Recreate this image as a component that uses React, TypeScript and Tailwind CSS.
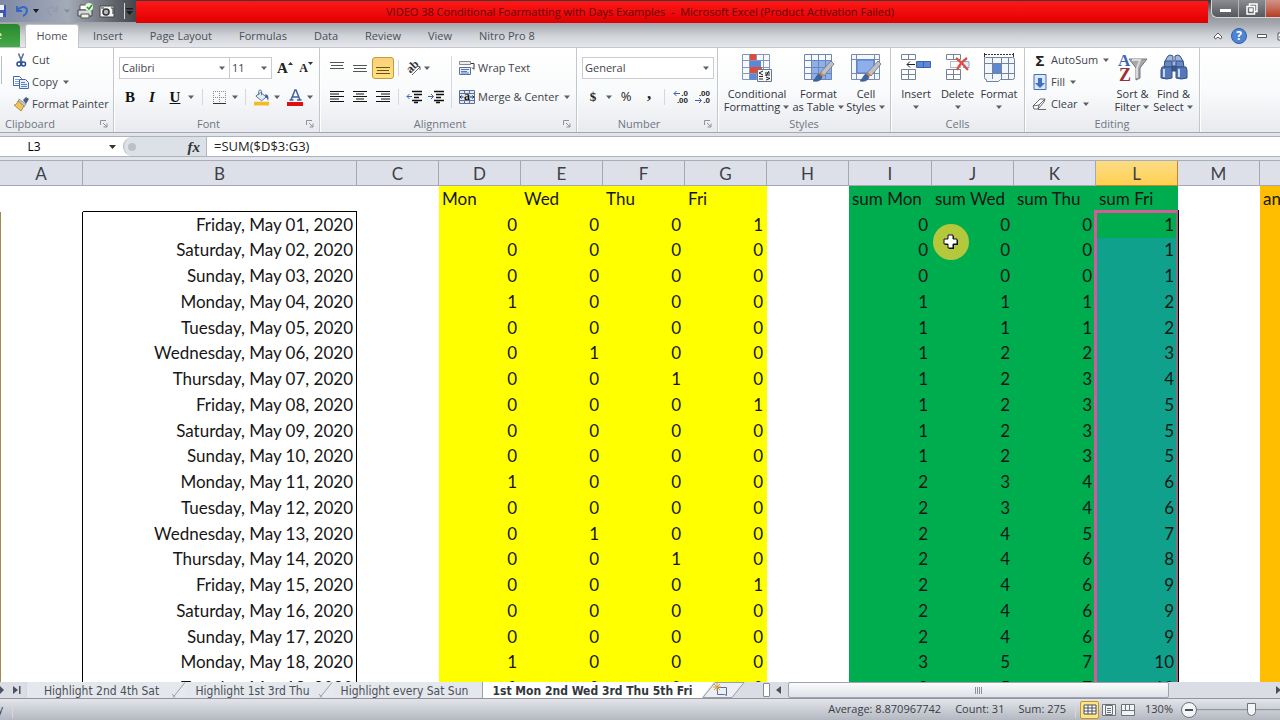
import type { ReactNode } from 'react';

const DAY_NAMES = ['Sunday', 'Monday', 'Tuesday', 'Wednesday', 'Thursday', 'Friday', 'Saturday'];
const TRACKED = [1, 3, 4, 5];

const buildRows = () => {
  let total = [0, 0, 0, 0];
  return Array.from({ length: 19 }, (_, i) => {
    const weekday = (5 + i) % 7;
    const flags = TRACKED.map((d) => (d === weekday ? 1 : 0));
    total = total.map((t, n) => t + flags.slice(0, n + 1).reduce((a: number, b) => a + b, 0));
    return {
      date: `${DAY_NAMES[weekday]}, May ${String(i + 1).padStart(2, '0')}, 2020`,
      flags,
      sums: total,
    };
  });
};

const rows = buildRows();
const COLUMNS = ['A', 'B', 'C', 'D', 'E', 'F', 'G', 'H', 'I', 'J', 'K', 'L', 'M'];

const Arrow = () => (
  <svg width="8" height="8" viewBox="0 0 8 8" className="shrink-0">
    <path d="M1 2.500h6L4 6z" fill="#5a5f68" />
  </svg>
);

const Sep = ({ className = '' }: { className?: string }) => (
  <span className={`w-px shrink-0 bg-[#d5d8de] ${className}`} />
);

const Launcher = () => (
  <button aria-label="More options" className="mr-1 flex w-3 items-center justify-center">
    <svg width="9" height="9" viewBox="0 0 9 9" fill="none" stroke="#8d929b">
      <path d="M1.500 6V1.500H7M4 4l4 4M8 4.500V8H4.500" />
    </svg>
  </button>
);

interface GroupProps {
  label: string;
  width: string;
  launcher?: boolean;
  align?: string;
  children: ReactNode;
}

const Group = ({ label, width, launcher, align = 'text-center', children }: GroupProps) => (
  <section className={`flex shrink-0 flex-col border-r border-[#c3c7ce] shadow-[1px_0_0_#ffffff] ${width}`}>
    <div className="flex flex-1">{children}</div>
    <div className="flex h-[17px] text-[#70757e]">
      <span className={`flex-1 leading-[17px] ${align}`}>{label}</span>
      {launcher && <Launcher />}
    </div>
  </section>
);

/* ---------- small icons ---------- */

const CutIcon = () => (
  <svg width="16" height="16" viewBox="0 0 16 16" fill="none">
    <path d="M5.500 1.500L9 10M10.500 1.500L7 10" stroke="#5b6f96" strokeWidth="1.600" />
    <circle cx="6" cy="12" r="2" stroke="#274b94" strokeWidth="1.500" />
    <circle cx="10.500" cy="12" r="2" stroke="#274b94" strokeWidth="1.500" />
  </svg>
);

const CopyIcon = () => (
  <svg width="16" height="16" viewBox="0 0 16 16" fill="#ffffff" stroke="#4567a8">
    <path d="M.5 2.500h6l2 2v7h-8z" />
    <path d="M2 5.500h4M2 7.500h4M2 9.500h4" stroke="#7fa0d8" />
    <path d="M6.500 5.500h6l3 3v6h-9z" fill="#e6eefb" />
    <path d="M8 8.500h4M8 10.500h6M8 12.500h6" stroke="#5b82c8" />
  </svg>
);

const PainterIcon = () => (
  <svg width="16" height="16" viewBox="0 0 16 16">
    <path d="M10 4l3-3 3 2-3 5z" fill="#4a5c88" />
    <path d="M6 3l7 5-2 3-6-5z" fill="#c4c8cf" stroke="#7c8087" strokeWidth=".7" />
    <path d="M5 5l6 5-3 5-7-6c2 0 3-2 4-4z" fill="#edc65a" stroke="#a77d2b" strokeWidth=".8" />
  </svg>
);

const BordersIcon = () => (
  <svg width="15" height="15" viewBox="0 0 15 15" fill="none" stroke="#8a8a8a" strokeDasharray="1 1">
    <path d="M1.500 1v12M7.500 1v12M13.500 1v12M1 1.500h13M1 7.500h13" />
    <path d="M1 13.500h13" stroke="#333333" strokeDasharray="none" />
  </svg>
);

const FillColorIcon = () => (
  <svg width="17" height="17" viewBox="0 0 17 17">
    <path d="M7 3l6 5-5 4-6-5z" fill="#e3ecf9" stroke="#5a6c8c" />
    <path d="M5 6V2c0-2 3-2 3 0v4" fill="none" stroke="#5a6c8c" />
    <path d="M12 5c3 0 4 3 3 7-1-2-1-3-3-4z" fill="#355fae" />
    <path d="M0 13h16v4H0z" fill="#f0bd25" />
  </svg>
);

const FontColorIcon = () => (
  <svg width="16" height="17" viewBox="0 0 16 17">
    <path d="M4 11L8 1h1l4 10M5.500 8h6M2.500 11h4M10 11h4.500" fill="none" stroke="#3c5fa3" strokeWidth="1.500" />
    <path d="M0 13h16v4H0z" fill="#dd1111" />
  </svg>
);

const Lines = ({ d, color = '#111111' }: { d: string; color?: string }) => (
  <svg width="14" height="14" viewBox="0 0 14 14" stroke={color} fill="none">
    <path d={d} />
  </svg>
);

const IndentIcon = ({ right = false }: { right?: boolean }) => (
  <svg width="16" height="14" viewBox="0 0 16 14" fill="none" stroke="#111111">
    <path d="M6 1.500h10M8 4.500h8M8 7.500h5M6 10.500h10M8 12.500h4" strokeWidth="1.400" />
    <path d={right ? 'M0 6.500h5M3 4l2.500 2.500L3 9' : 'M1 6.500h5M3.500 4L1 6.500 3.500 9'} stroke="#3e62b2" />
  </svg>
);

const OrientationIcon = () => (
  <svg width="16" height="16" viewBox="0 0 16 16" fill="none">
    <text x="1" y="11" transform="rotate(-45 6 8)" fontSize="12" fontWeight="bold" fontFamily="Liberation Serif, serif" fill="#333333">
      ab
    </text>
    <path d="M6 15l8-8M14 10V6.500h-3.500" stroke="#666666" />
  </svg>
);

const WrapIcon = () => (
  <svg width="16" height="16" viewBox="0 0 16 16" fill="none">
    <path d="M.5 1.500h11v3H.5z" fill="#eeeeee" stroke="#888888" />
    <path d="M.5 7.500h11v7H.5z" fill="#e4edfa" stroke="#5e6f8f" />
    <path d="M2 9.500h8M2 11.500h6M2 13h8" stroke="#5279c0" />
    <path d="M12 3.500h3V9M13 7.500L15 9.500" stroke="#333333" />
  </svg>
);

const MergeIcon = () => (
  <svg width="16" height="16" viewBox="0 0 16 16" fill="none">
    <path d="M.5 1.500h15v13H.5zM5.500 1.500v3M10.500 1.500v3M5.500 12v3M10.500 12v3M.5 4.500h15M.5 11.500h15" fill="#dfe9f8" stroke="#60718f" />
    <text x="5" y="11" fontSize="12" fontWeight="bold" fontFamily="Liberation Serif, serif" fill="#111111">
      a
    </text>
    <path d="M1 8h3.500M2.500 6.500L1 8l1.500 1.500M11 8h4M13.500 6.500L15 8l-1.500 1.500" stroke="#1f2f55" />
  </svg>
);

const DecimalIcon = ({ increase = false }: { increase?: boolean }) => (
  <svg width="16" height="16" viewBox="0 0 16 16" fill="#222222" fontSize="8" fontWeight="bold" fontFamily="Liberation Sans, sans-serif">
    <text x="15" y="7" textAnchor="end">{increase ? '.0' : '.00'}</text>
    <text x="15" y="14" textAnchor="end">{increase ? '.00' : '.0'}</text>
    <path d={increase ? 'M1 4.500h6M3.500 2L1 4.500 3.500 7' : 'M0 11.500h6M4 9l2.500 2.500L4 14'} fill="none" stroke="#3e62b2" />
  </svg>
);

/* ---------- large icons ---------- */

const GRID = 'M1.500 1.500h27v25h-27zM8.500 1v26M15.500 1v26M22.500 1v26M1 7.500h28M1 14.500h28M1 20.500h28';

const Brush = () => (
  <>
    <path d="M28 8l3 3-10 12-4-3z" fill="#bfc1c4" stroke="#707276" strokeWidth=".8" />
    <path d="M18 19l3 3-2 2-3-3z" fill="#c08a4a" />
    <path d="M16 21l3 3c-1 4-5 5-9 4 3-2 3-6 6-7z" fill="#41649f" stroke="#32507f" strokeWidth=".6" />
  </>
);

const ConditionalIcon = () => (
  <svg width="32" height="29" viewBox="0 0 32 29">
    <path d={GRID} fill="#f6f9fe" stroke="#8496bb" />
    <path d="M9 1h6v6H9zM9 14h12v6H9z" fill="#dd4b3b" />
    <path d="M9 8h11v6H9zM9 21h6v6H9z" fill="#5f88d4" />
    <path d="M16.500 16.500h14v12h-14z" fill="#f7f8fb" stroke="#6b7687" />
    <path d="M22 18l-4 2 4 2M18 23.500h4M18 26h4M24 20h5M24 22h5M28 18l-3 5M25 24l4 1.500-4 1.500" fill="none" stroke="#222222" />
  </svg>
);

const FormatTableIcon = () => (
  <svg width="32" height="29" viewBox="0 0 32 29">
    <path d={GRID} fill="#f6f9fe" />
    <path d="M9 8h20v19H9z" fill="#8db0ec" />
    <path d={GRID} fill="none" stroke="#6e86b6" />
    <Brush />
  </svg>
);

const CellStylesIcon = () => (
  <svg width="32" height="29" viewBox="0 0 32 29">
    <path d="M1.500 1.500h28v25h-28zM6.500 1v26M24.500 1v26M1 6.500h28M1 20.500h28" fill="#f3f7fd" stroke="#7a8cac" />
    <path d="M7 7h17v13H7z" fill="#8db0ec" stroke="#5279c0" />
    <Brush />
  </svg>
);

const InsertIcon = () => (
  <svg width="32" height="29" viewBox="0 0 32 29">
    <path d="M1.500 1.500h14v5h-14zM8.500 1v6M1.500 16.500h14v10h-14zM8.500 16v11M1 21.500h15" fill="#ffffff" stroke="#74829b" />
    <path d="M16.500 8.500h14v6h-14z" fill="#5f88d4" stroke="#3b62ad" />
    <path d="M23.500 8v7" stroke="#3b62ad" />
    <path d="M7 11.500h8M10 8.500l-3 3 3 3" fill="none" stroke="#222222" />
  </svg>
);

const DeleteIcon = () => (
  <svg width="32" height="29" viewBox="0 0 32 29">
    <path d="M4.500 1.500h14v5h-14zM11.500 1v6M4.500 16.500h14v10h-14zM11.500 16v11M4 21.500h15" fill="#ffffff" stroke="#74829b" />
    <path d="M8.500 8.500h10v6h-10z" fill="none" stroke="#777777" strokeDasharray="1 1" />
    <path d="M21 8.500h6v6h-6" fill="#dfe9fa" stroke="#8aa4d6" />
    <path d="M14 5c4 3 8 7 12 12M25 5c-4 3-8 7-10 12" fill="none" stroke="#dd5040" strokeWidth="2.200" />
  </svg>
);

const FormatIcon = () => (
  <svg width="32" height="29" viewBox="0 0 32 29">
    <path d="M2 1.500h28" stroke="#333333" strokeDasharray="2 1" />
    <path d="M1.500 0v4M30.500 0v4" stroke="#333333" />
    <path d="M2.500 4.500h27q2 0 2 2v18q0 2-2 2h-12l-2 2h-12v-2q-2 0-2-2v-20zM9.500 4v22M18.500 4v22M25.500 4v22M2 10.500h29M2 20.500h29" fill="#f2f6fd" stroke="#74829b" />
    <path d="M10 11h8v9h-8z" fill="#5f88d4" />
  </svg>
);

const SortIcon = () => (
  <svg width="30" height="29" viewBox="0 0 30 29">
    <path d="M11 6h18l-7 9v10l-4 2V15z" fill="#a5a7aa" stroke="#77797d" />
    <path d="M14 7h8l-3 8v10" fill="none" stroke="#d9dadc" strokeWidth="2" />
    <text x="0" y="13" fontSize="17" fontWeight="bold" fontFamily="Liberation Serif, serif" fill="#3f66b5">A</text>
    <text x="1" y="28" fontSize="18" fontWeight="bold" fontFamily="Liberation Serif, serif" fill="#9c2e33">Z</text>
  </svg>
);

const FindIcon = () => (
  <svg width="30" height="29" viewBox="0 0 30 29" stroke="#35507f">
    <path d="M9 3q2-2 5 0v5h2V3q3-2 5 0l3 5v6H6V8z" fill="#9fb6e0" />
    <path d="M6 8h7v6H5zM17 8h7l1 6h-8z" fill="#6888c4" />
    <path d="M3 14h10v11q-5 2-11 0v-8zM17 14h10l1 3v8q-6 2-11 0z" fill="#5478bb" />
    <path d="M5 16v8M20 16v8" stroke="#c8d8f4" strokeWidth="2" />
    <path d="M13 13h4v5h-4z" fill="#3d5890" />
  </svg>
);

interface BigButtonProps {
  icon: ReactNode;
  top: string;
  bottom?: string;
  width: string;
}

const BigButton = ({ icon, top, bottom, width }: BigButtonProps) => (
  <button className={`flex shrink-0 flex-col items-center whitespace-nowrap leading-[13px] text-[#30343b] ${width}`}>
    {icon}
    <span className="mt-[5px]">{top}</span>
    <span className="flex h-[13px] items-center gap-[2px]">
      {bottom}
      <Arrow />
    </span>
  </button>
);

const SmallButton = ({ icon, label, arrow }: { icon: ReactNode; label: string; arrow?: boolean }) => (
  <button className="flex h-[22px] items-center whitespace-nowrap">
    <span className="mr-[3px] flex w-4 justify-center">{icon}</span>
    {label}
    {arrow && <span className="ml-1"><Arrow /></span>}
  </button>
);

const IconButton = ({ label, width = 'w-[22px]', className = '', children }: { label: string; width?: string; className?: string; children: ReactNode }) => (
  <button aria-label={label} className={`flex h-[22px] shrink-0 items-center justify-center ${width} ${className}`}>
    {children}
  </button>
);

const TitleBar = () => (
  <header className="flex h-[24px] shrink-0 items-start bg-linear-to-b from-[#3c3538] via-[#8b8d92] to-[#a5a8ae]">
    <div className="flex h-[22px] w-[136px] shrink-0 items-center bg-linear-to-r from-[#7f8aa4] via-[#a3abb8] to-[#45464b]">
      <button aria-label="Save" className="w-[7px] overflow-hidden">
        <svg width="7" height="14" viewBox="0 0 7 14">
          <path d="M0 1h6v12H0z" fill="#3f55b5" />
          <path d="M0 1h4v5H0zM0 9h3v4H0z" fill="#eef2fb" />
        </svg>
      </button>
      <button aria-label="Undo" className="ml-2 flex items-center gap-[3px]">
        <svg width="14" height="14" viewBox="0 0 14 14" fill="none" stroke="#3567c4" strokeWidth="2">
          <path d="M2 2v5h5M2 7c3-5 9-5 10-1 0 3-2 5-4 6" />
        </svg>
        <svg width="8" height="8" viewBox="0 0 8 8"><path d="M1 2h6L4 6z" fill="#1c1c1c" /></svg>
      </button>
      <button aria-label="Redo" className="ml-[6px] flex items-center gap-1 opacity-40">
        <svg width="13" height="14" viewBox="0 0 14 14" fill="none" stroke="#8b95a8" strokeWidth="2">
          <path d="M12 2v5H7M12 7C9 2 3 2 2 6c0 3 2 5 4 6" />
        </svg>
        <Arrow />
      </button>
      <button aria-label="Quick Print" className="ml-[6px]">
        <svg width="16" height="16" viewBox="0 0 16 16">
          <path d="M3 2h8v5H3z" fill="#ffffff" stroke="#555555" />
          <path d="M1 7h14v6H1z" fill="#d5d7da" stroke="#444444" />
          <path d="M4 11h8v4H4z" fill="#eef7d8" stroke="#555555" />
          <circle cx="12" cy="4" r="4" fill="#e2f5de" />
          <path d="M10 4l2 2 3-4" fill="none" stroke="#279327" strokeWidth="1.500" />
        </svg>
      </button>
      <button aria-label="Camera" className="ml-[6px]">
        <svg width="16" height="14" viewBox="0 0 16 14">
          <path d="M1 2h14v11H1z" fill="#f2f3f4" stroke="#444444" />
          <circle cx="7" cy="8" r="3" fill="#b5b8bc" stroke="#333333" strokeWidth="1.500" />
          <path d="M2 4h3M12 4h2v6" fill="none" stroke="#333333" />
        </svg>
      </button>
      <Sep className="ml-[9px] h-4" />
      <button aria-label="Customize Quick Access Toolbar">
        <svg width="9" height="9" viewBox="0 0 9 9">
          <path d="M1 1h7v1.500H1zM1 4h7L4.500 8z" fill="#1c1c1c" />
        </svg>
      </button>
    </div>
    <h1 className="mt-px h-[22px] min-w-0 flex-1 truncate bg-linear-to-b from-[#ff1717] to-[#df0000] pr-[64px] text-center text-[11px] leading-[22px] text-[#640808]">
      VIDEO 38 Conditional Foarmatting with Days Examples&nbsp; -&nbsp; Microsoft Excel (Product Activation Failed)
    </h1>
    <div className="ml-[3px] flex h-[18px] w-[69px] shrink-0 overflow-hidden rounded-bl-md border-b border-l border-[#d5d7da] bg-linear-to-b from-[#8c8d91] to-[#55575c]">
      <button aria-label="Minimize" className="flex w-[27px] items-end justify-center border-r border-[#b4b5b8] pb-[5px]">
        <span className="h-[3px] w-[11px] bg-white" />
      </button>
      <button aria-label="Restore" className="flex w-[27px] items-center justify-center border-r border-[#b4b5b8]">
        <svg width="12" height="12" viewBox="0 0 12 12" fill="none" stroke="#ffffff" strokeWidth="1.500">
          <path d="M1 3.500h7.500V11H1zM3.500 3V1H11v7.500H9M4 6h2v2H4z" />
        </svg>
      </button>
      <button aria-label="Close" className="flex-1 bg-linear-to-b from-[#d29388] to-[#b53a22]" />
    </div>
  </header>
);

const TABS = ['Insert', 'Page Layout', 'Formulas', 'Data', 'Review', 'View', 'Nitro Pro 8'];

const TabStrip = () => (
  <nav className="flex h-[24px] shrink-0 items-stretch border-b border-[#c4c8ce] bg-linear-to-b from-[#a5a8ae] via-[#cfd2d7] to-[#e6e8ec] text-[#4b4f57]">
    <button className="flex w-5 items-center justify-end overflow-hidden rounded-tr-sm bg-linear-to-b from-[#25872c] to-[#48a94a] pr-[18px] text-white">
      File
    </button>
    <button className="-mb-px ml-[5px] w-[54px] rounded-t-[3px] border border-b-0 border-[#bfc3ca] bg-white">Home</button>
    <div className="ml-px flex gap-px">
      {TABS.map((tab) => (
        <button key={tab} className="whitespace-nowrap px-[13px] pt-px">{tab}</button>
      ))}
    </div>
    <div className="ml-auto flex items-center">
      <button aria-label="Minimize the Ribbon">
        <svg width="10" height="10" viewBox="0 0 10 10" fill="#ffffff" stroke="#555a63">
          <path d="M1 6l4-4 4 4-1.500 2L5 6 2.500 8z" />
        </svg>
      </button>
      <button aria-label="Help" className="ml-2 flex size-4 items-center justify-center rounded-full border border-[#2e5fae] bg-[#4d84d6] text-[12px] font-bold text-white">
        ?
      </button>
      <button aria-label="Minimize Window" className="ml-[9px]">
        <svg width="12" height="8" viewBox="0 0 12 8"><path d="M1.500 2.500h9v3h-9z" fill="#ffffff" stroke="#555a63" /></svg>
      </button>
      <button aria-label="Restore Window" className="ml-[9px] w-[3px] overflow-hidden">
        <svg width="10" height="10" viewBox="0 0 10 10"><path d="M1 2h8v7H1zM3 5h4v2H3z" fill="#ffffff" stroke="#555a63" /></svg>
      </button>
    </div>
  </nav>
);

const comboClass = 'flex h-[22px] items-center border border-[#c9ccd2] bg-white pl-[2px] pr-[3px]';
const selectClass = 'min-w-0 flex-1 appearance-none bg-transparent outline-none';

const Ribbon = () => (
  <div className="flex h-[85px] shrink-0 overflow-hidden border-b border-[#a4a8b0] bg-linear-to-b from-white via-[#fafbfc] to-[#e8eaef] text-[#3f434a]">
    <Group label="Clipboard" width="w-[114px]" align="pl-[5px] text-left" launcher>
      <span className="mt-2 h-7 w-[2px] border-r border-[#b9bdc6]" />
      <div className="ml-[11px] flex flex-col pt-px">
        <SmallButton icon={<CutIcon />} label="Cut" />
        <SmallButton icon={<CopyIcon />} label="Copy" arrow />
        <SmallButton icon={<PainterIcon />} label="Format Painter" />
      </div>
    </Group>

    <Group label="Font" width="w-[206px]" launcher>
      <div className="flex flex-col gap-[7px] pl-[5px] pt-[9px]">
        <div className="flex items-center">
          <label className={`${comboClass} w-[111px]`}>
            <select aria-label="Font" className={selectClass}><option>Calibri</option></select>
            <Arrow />
          </label>
          <label className={`${comboClass} -ml-px w-[43px]`}>
            <select aria-label="Font size" className={selectClass}><option>11</option></select>
            <Arrow />
          </label>
          <IconButton label="Increase Font Size" className="ml-[2px]">
            <span className="font-['Liberation_Serif',serif] text-[15px] font-bold text-[#222222]">A</span>
            <svg width="5" height="14" viewBox="0 0 5 14"><path d="M0 4h5L2.500 1z" fill="#333333" /></svg>
          </IconButton>
          <IconButton label="Decrease Font Size" width="w-5">
            <span className="font-['Liberation_Serif',serif] text-[12px] font-bold text-[#222222]">A</span>
            <svg width="5" height="14" viewBox="0 0 5 14"><path d="M0 1h5L2.500 4z" fill="#333333" /></svg>
          </IconButton>
        </div>
        <div className="flex items-center font-['Liberation_Serif',serif] text-[15px] font-bold text-[#111111]">
          <IconButton label="Bold">B</IconButton>
          <IconButton label="Italic"><i>I</i></IconButton>
          <IconButton label="Underline" width="w-6"><u>U</u></IconButton>
          <Arrow />
          <Sep className="ml-[7px] h-4" />
          <IconButton label="Borders" width="w-[15px]" className="ml-[9px] mr-1"><BordersIcon /></IconButton>
          <Arrow />
          <Sep className="ml-[6px] h-4" />
          <IconButton label="Fill Color" width="w-4" className="ml-2 mr-[3px]"><FillColorIcon /></IconButton>
          <Arrow />
          <IconButton label="Font Color" width="w-4" className="ml-[6px] mr-[3px]"><FontColorIcon /></IconButton>
          <Arrow />
        </div>
      </div>
    </Group>

    <Group label="Alignment" width="w-[257px]" launcher>
      <div className="flex flex-col gap-[7px] pl-[6px] pt-[9px]">
        <div className="flex items-center gap-px">
          <IconButton label="Top Align"><Lines d="M0 1.500h14M1 4.500h12M0 7.500h14" color="#555555" /></IconButton>
          <IconButton label="Middle Align"><Lines d="M0 4.500h14M1 7.500h12M0 10.500h14" color="#555555" /></IconButton>
          <IconButton label="Bottom Align" className="rounded-[3px] border border-[#c29a3e] bg-linear-to-b from-[#fbd07a] to-[#ffe27e]">
            <Lines d="M0 6.500h14M1 9.500h12M0 12.500h14" color="#6a5320" />
          </IconButton>
          <Sep className="ml-[3px] h-4" />
          <IconButton label="Orientation" width="w-4" className="ml-[6px]"><OrientationIcon /></IconButton>
          <Arrow />
        </div>
        <div className="flex items-center gap-px">
          <IconButton label="Align Left"><Lines d="M0 1.500h14M0 4h9M0 6.500h14M0 9h9M0 11.500h14" /></IconButton>
          <IconButton label="Center"><Lines d="M0 1.500h14M3 4h8M0 6.500h14M3 9h8M0 11.500h14" /></IconButton>
          <IconButton label="Align Right"><Lines d="M0 1.500h14M5 4h9M0 6.500h14M5 9h9M0 11.500h14" /></IconButton>
          <Sep className="ml-[3px] h-4" />
          <IconButton label="Decrease Indent" width="w-4" className="ml-[6px]"><IndentIcon /></IconButton>
          <IconButton label="Increase Indent" width="w-4" className="ml-[5px]"><IndentIcon right /></IconButton>
        </div>
      </div>
      <Sep className="ml-[7px] mt-2 h-[52px]" />
      <div className="ml-[7px] flex flex-col gap-[7px] pt-[9px]">
        <SmallButton icon={<WrapIcon />} label="Wrap Text" />
        <SmallButton icon={<MergeIcon />} label="Merge & Center" arrow />
      </div>
    </Group>

    <Group label="Number" width="w-[141px]" launcher>
      <div className="flex flex-1 flex-col gap-[7px] pl-[5px] pr-[3px] pt-[9px]">
        <label className={comboClass}>
          <select aria-label="Number format" className={selectClass}><option>General</option></select>
          <Arrow />
        </label>
        <div className="flex items-center text-[13px] text-[#222222]">
          <IconButton label="Accounting Number Format" className="font-['Liberation_Serif',serif] font-bold">$</IconButton>
          <span className="ml-px"><Arrow /></span>
          <IconButton label="Percent Style" className="ml-[2px]">%</IconButton>
          <IconButton label="Comma Style" className="ml-px pb-[6px] font-['Liberation_Serif',serif] text-[17px] font-bold">,</IconButton>
          <Sep className="ml-[4px] h-4" />
          <IconButton label="Increase Decimal" width="w-4" className="ml-2"><DecimalIcon increase /></IconButton>
          <IconButton label="Decrease Decimal" width="w-4" className="ml-[6px]"><DecimalIcon /></IconButton>
        </div>
      </div>
    </Group>

    <Group label="Styles" width="w-[173px]">
      <div className="flex pl-[4px] pt-[5px]">
        <BigButton icon={<ConditionalIcon />} top="Conditional" bottom="Formatting" width="w-[70px]" />
        <BigButton icon={<FormatTableIcon />} top="Format" bottom="as Table" width="w-[53px]" />
        <BigButton icon={<CellStylesIcon />} top="Cell" bottom="Styles" width="w-[42px]" />
      </div>
    </Group>

    <Group label="Cells" width="w-[134px]">
      <div className="flex pl-[4px] pt-[5px]">
        <BigButton icon={<InsertIcon />} top="Insert" width="w-[42px]" />
        <BigButton icon={<DeleteIcon />} top="Delete" width="w-[41px]" />
        <BigButton icon={<FormatIcon />} top="Format" width="w-[42px]" />
      </div>
    </Group>

    <Group label="Editing" width="w-[175px]">
      <div className="ml-[7px] flex w-[80px] flex-col pt-px">
        <SmallButton icon={<span className="text-[15px] font-bold text-[#222222]">Σ</span>} label="AutoSum" arrow />
        <SmallButton
          icon={
            <svg width="14" height="16" viewBox="0 0 14 16">
              <path d="M1 .5h12v15H1z" fill="#dce8fa" stroke="#496bb0" />
              <path d="M5 4h4v5h3l-5 5-5-5h3z" fill="#3f6fc9" />
            </svg>
          }
          label="Fill"
          arrow
        />
        <SmallButton
          icon={
            <svg width="16" height="14" viewBox="0 0 16 14" fill="#ffffff" stroke="#666a72">
              <path d="M1 9l7-7h5l-1 3-6 7H2z" />
              <path d="M6 12l1-4 6-6M1 9l6-1M6 12.500h8" fill="none" />
            </svg>
          }
          label="Clear"
          arrow
        />
      </div>
      <div className="flex pt-[5px]">
        <BigButton icon={<SortIcon />} top="Sort &" bottom="Filter" width="w-[41px]" />
        <BigButton icon={<FindIcon />} top="Find &" bottom="Select" width="w-[41px]" />
      </div>
    </Group>
  </div>
);

const FormulaBar = () => (
  <div className="flex h-[28px] shrink-0 border-b border-[#a9adb5] bg-[#e1e4ea] py-[3px]">
    <div className="flex flex-1 border-y border-[#aeb2ba] bg-white">
      <input aria-label="Name Box" defaultValue="L3" className="w-[68px] text-center text-[12px] outline-none" />
      <button aria-label="Name Box list" className="ml-[40px] flex w-[10px] items-center">
        <svg width="8" height="8" viewBox="0 0 8 8"><path d="M1 2h7L4.500 6z" fill="#333333" /></svg>
      </button>
      <div className="ml-[5px] flex w-[84px] items-center justify-between rounded-l-full border-r border-l border-[#b2b6be] bg-[#dce0e7] pl-1 pr-[6px]">
        <span className="h-2 w-2 rounded-full bg-[#bcc0c8]" />
        <button aria-label="Insert Function" className="font-['Liberation_Serif',serif] text-[15px] leading-4 font-bold italic text-[#333333]">
          fx
        </button>
      </div>
      <input aria-label="Formula" defaultValue="=SUM($D$3:G3)" className="min-w-0 flex-1 pl-[7px] text-[13px] text-[#222222] outline-none" />
    </div>
  </div>
);

const Sheet = () => (
  <main className="relative min-h-0 flex-1 overflow-hidden bg-white">
    <table className="h-[540px] w-full table-fixed border-separate border-spacing-0 font-['Lato',sans-serif] text-[17px] leading-5 whitespace-nowrap text-[#161616]">
      <colgroup>
        <col className="w-[83px]" />
        <col className="w-[274px]" />
        <col className="w-[82px]" />
        <col className="w-[82px]" />
        <col className="w-[82px]" />
        <col className="w-[82px]" />
        <col className="w-[82px]" />
        <col className="w-[82px]" />
        <col className="w-[83px]" />
        <col className="w-[82px]" />
        <col className="w-[82px]" />
        <col className="w-[82px]" />
        <col className="w-[82px]" />
        <col />
      </colgroup>
      <thead>
        <tr className="h-[25px] text-[#3c4048]">
          {COLUMNS.map((c) => (
            <th
              key={c}
              scope="col"
              className={`h-[25px] border-r border-b px-0 pt-[2px] pb-0 font-normal ${c === 'L' ? 'border-[#c08a2c] bg-linear-to-b from-[#fbdc85] to-[#ffd050]' : 'border-[#a3a8b2] bg-[#dde0e8]'}`}
            >
              {c}
            </th>
          ))}
          <th aria-label="N" className="border-b border-[#a3a8b2] bg-[#dde0e8] p-0" />
        </tr>
      </thead>
      <tbody>
        <tr>
          <td className="p-0" />
          <td className="border-b border-black p-0" />
          <td className="p-0" />
          {['Mon', 'Wed', 'Thu', 'Fri'].map((d) => (
            <td key={d} className="bg-[#ffff00] py-0 pr-0 pl-[3px]">{d}</td>
          ))}
          <td className="p-0" />
          {['Mon', 'Wed', 'Thu', 'Fri'].map((d) => (
            <td key={d} className="bg-[#00ad4e] py-0 pr-0 pl-[3px]">sum {d}</td>
          ))}
          <td className="p-0" />
          <td className="overflow-hidden bg-[#ffbf00] py-0 pr-0 pl-[3px]">an</td>
        </tr>
        {rows.map(({ date, flags, sums }, i) => (
          <tr key={date} className="text-right">
            <td className="border-r border-l border-l-[#a58a4c] border-r-black p-0" />
            <td className="border-r border-black py-0 pr-[3px] pl-0">{date}</td>
            <td className="p-0" />
            {flags.map((n, c) => (
              <td key={c} className="bg-[#ffff00] py-0 pr-[4px] pl-0">{n}</td>
            ))}
            <td className="p-0" />
            {sums.map((n, c) => (
              <td key={c} className={`py-0 pr-[4px] pl-0 ${c === 3 && i > 0 ? 'bg-[#10a18c]' : 'bg-[#00ad4e]'}`}>{n}</td>
            ))}
            <td className="p-0" />
            <td className="bg-[#ffbf00] p-0" />
          </tr>
        ))}
      </tbody>
    </table>

    {/* selected range outline */}
    <div className="pointer-events-none absolute top-[49px] -bottom-1 left-[1094px] w-[85px] border-r border-black">
      <div className="h-full border-3 border-r-2 border-[#d65a9b] border-r-[#8f6b80]" />
    </div>

    {/* highlighted mouse pointer */}
    <div className="pointer-events-none absolute top-[63px] left-[933px] flex size-9 items-center justify-center rounded-full bg-[#b5c73b]">
      <svg width="18" height="18" viewBox="0 0 18 18">
        <path d="M7 3h5v4h4v5h-4v4H7v-4H3V7h4z" fill="#111111" />
        <path d="M6 2h5v4h4v5h-4v4H6v-4H2V6h4z" fill="#ffffff" stroke="#111111" />
      </svg>
    </div>
  </main>
);

const Slant = () => (
  <svg width="14" height="16" viewBox="0 0 14 16" className="shrink-0">
    <path d="M0 16L13 0h1v16z" fill="#e6e9ee" />
    <path d="M1 15.500L13 .5M0 12l3 3.500" fill="none" stroke="#9a9fa8" />
  </svg>
);

const SheetTabs = () => (
  <div className="flex h-[17px] shrink-0 items-stretch border-b border-[#8f949e] bg-[#dadde4] leading-4 text-[#4b4f57]">
    <button aria-label="Next sheet" className="flex w-1 items-center">
      <svg width="4" height="8" viewBox="0 0 4 8"><path d="M0 0l4 4-4 4z" fill="#4b5263" /></svg>
    </button>
    <button aria-label="Last sheet" className="ml-[9px] flex w-2 items-center">
      <svg width="8" height="8" viewBox="0 0 8 8"><path d="M0 0l5 4-5 4zM6 0h1.500v8H6z" fill="#4b5263" /></svg>
    </button>
    <Sep className="ml-[5px]" />
    <div className="flex bg-[#e4e7ec] font-['DejaVu_Sans_Condensed','DejaVu_Sans',sans-serif] text-[12px] whitespace-nowrap">
      <button className="w-[145px] pt-px pl-[4px]">Highlight 2nd 4th Sat</button>
      <Slant />
      <button className="w-[133px] pt-px">Highlight 1st 3rd Thu</button>
      <Slant />
      <button className="w-[149px] pt-px pr-[6px]">Highlight every Sat Sun</button>
      <button className="w-[220px] border-l border-[#9a9fa8] bg-white pt-px font-bold text-[#33363c]">1st Mon 2nd Wed 3rd Thu 5th Fri</button>
    </div>
    <button aria-label="Insert Worksheet" className="shrink-0">
      <svg width="44" height="16" viewBox="0 0 44 16" fill="none">
        <path d="M0 0h12L0 15z" fill="#ffffff" />
        <path d="M1 15.500L13 .5h29l-12 15z" fill="#eceef2" stroke="#9a9fa8" />
        <path d="M15.500 5.500h9v8l-2-1h-7z" fill="#e9effa" stroke="#5c6d9d" />
        <path d="M15 1v8M11 5h8M12 2l6 6M18 2l-6 6" stroke="#d99c33" />
      </svg>
    </button>
    <div className="ml-[17px] flex flex-1 items-stretch">
      <span className="my-px w-[7px] rounded-[1px] border border-[#858a94] bg-white" />
      <button aria-label="Scroll left" className="flex w-[18px] items-center justify-center">
        <svg width="6" height="8" viewBox="0 0 6 8"><path d="M5 0v8L0 4z" fill="#4b4f57" /></svg>
      </button>
      <div className="flex flex-1">
        <div className="flex w-[78%] items-center justify-center gap-px rounded-[2px] border border-[#9fa4ae] bg-linear-to-b from-[#fbfbfd] to-[#dfe2e8]">
          {[0, 1, 2, 3].map((n) => (
            <span key={n} className="h-[7px] w-px bg-[#8d929b]" />
          ))}
        </div>
      </div>
      <button aria-label="Scroll right" className="flex w-1 items-center">
        <svg width="4" height="8" viewBox="0 0 4 8"><path d="M0 0l5 4-5 4z" fill="#4b4f57" /></svg>
      </button>
    </div>
  </div>
);

const StatusBar = () => (
  <footer className="flex h-[21px] shrink-0 items-center bg-linear-to-b from-[#e3e5ea] to-[#b4b8c1] text-[#3a3e46]">
    <span className="flex w-3 justify-end overflow-hidden pr-[9px]">Ready</span>
    <Sep className="h-4 bg-[#9a9ea7]" />
    <span className="ml-auto">Average: 8.870967742</span>
    <span className="ml-[14px]">Count: 31</span>
    <span className="ml-[14px]">Sum: 275</span>
    <Sep className="ml-[9px] h-4 bg-[#9a9ea7]" />
    <button aria-label="Normal" className="ml-1 flex h-[18px] w-[19px] items-center justify-center rounded-[2px] border border-[#c2952f] bg-[#ffe384]">
      <svg width="14" height="12" viewBox="0 0 14 12"><path d="M1 1h12v9H1zM5 1v9M9 1v9M1 4h12M1 7h12" fill="#ffffff" stroke="#494e57" /></svg>
    </button>
    <button aria-label="Page Layout" className="ml-[3px]">
      <svg width="14" height="12" viewBox="0 0 14 12" fill="#f2f3f5" stroke="#6d727b"><path d="M.5.5h13v11H.5zM3.500 1.500h7v9h-7zM5 4.500h4M5 6.500h4M5 8.500h4" /></svg>
    </button>
    <button aria-label="Page Break Preview" className="ml-[5px]">
      <svg width="14" height="12" viewBox="0 0 14 12" fill="#f2f3f5" stroke="#6d727b"><path d="M.5.5h13v11H.5zM4.500.5v6M8.500.5v6h-8M8.500 6.500h5" /></svg>
    </button>
    <button className="ml-[10px]">130%</button>
    <button aria-label="Zoom out" className="ml-2 flex size-4 items-center justify-center rounded-full border border-[#6d727b] bg-[#f4f5f7]">
      <span className="h-[2px] w-2 bg-[#4b4f57]" />
    </button>
    <input
      type="range"
      aria-label="Zoom"
      defaultValue={67}
      className="h-4 w-[83px] appearance-none bg-linear-to-b from-transparent from-45% via-[#868b94] via-45% to-transparent to-55% [&::-webkit-slider-thumb]:h-[13px] [&::-webkit-slider-thumb]:w-[9px] [&::-webkit-slider-thumb]:appearance-none [&::-webkit-slider-thumb]:rounded-b-full [&::-webkit-slider-thumb]:border [&::-webkit-slider-thumb]:border-[#6d727b] [&::-webkit-slider-thumb]:bg-[#f4f5f7]"
    />
  </footer>
);

export default function App() {
  return (
    <div className="flex h-screen flex-col overflow-hidden bg-[#e1e4ea] font-['Open_Sans',sans-serif] text-[11px]">
      <TitleBar />
      <TabStrip />
      <Ribbon />
      <FormulaBar />
      <Sheet />
      <SheetTabs />
      <StatusBar />
    </div>
  );
}
